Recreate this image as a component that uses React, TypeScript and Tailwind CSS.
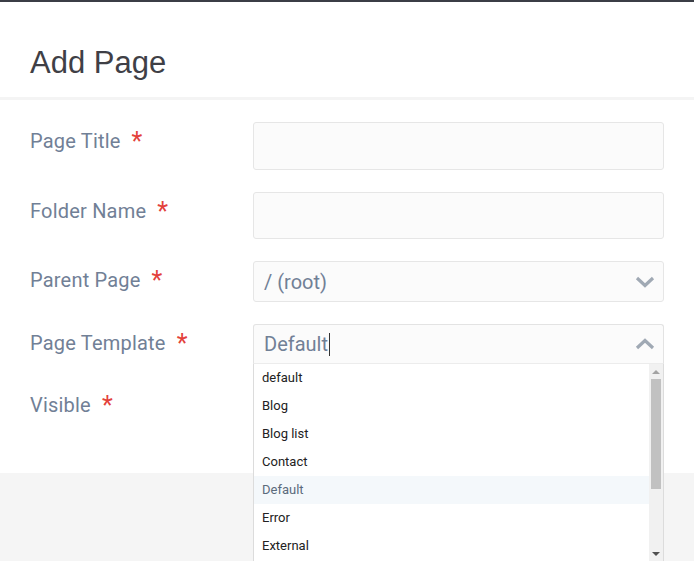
import React from 'react';

const templates = ['default', 'Blog', 'Blog list', 'Contact', 'Default', 'Error', 'External'];

const Label = ({ text }: { text: string }) => (
  <div className="flex w-[223px] shrink-0 items-start pt-[5px] text-[20px] leading-[28px] tracking-[0.2px] text-[#718096]">
    {text}
    <span className="ml-[11px] text-[25px] leading-[30px] text-[#e3413b]">*</span>
  </div>
);

const Chevron = ({ up }: { up?: boolean }) => (
  <svg width="20" height="12" viewBox="0 0 20 12" className="text-[#a0a9b4]">
    <polyline
      points={up ? '2,10 10,2.5 18,10' : '2,2 10,9.5 18,2'}
      fill="none"
      stroke="currentColor"
      strokeWidth="3.2"
      strokeLinejoin="miter"
    />
  </svg>
);

const Scrollbar = () => (
  <div className="flex w-[14px] shrink-0 flex-col items-center bg-[#f1f1f1]">
    <div className="flex h-[15px] w-full items-center justify-center">
      <div className="h-0 w-0 border-x-[4px] border-b-[4px] border-x-transparent border-b-[#a3a3a3]" />
    </div>
    <div className="h-[110px] w-[10px] bg-[#c1c1c1]" />
    <div className="flex-1" />
    <div className="flex h-[14px] w-full items-center justify-center">
      <div className="h-0 w-0 border-x-[4px] border-t-[4px] border-x-transparent border-t-[#505050]" />
    </div>
  </div>
);

export default function App() {
  return (
    <div className="flex h-[561px] w-[694px] flex-col overflow-hidden bg-white" style={{ fontFamily: 'Roboto, "Noto Sans", sans-serif' }}>
      <div className="h-[2px] bg-[#3b3e46]" />
      <header className="h-[98px] border-b-[3px] border-[#f4f4f4] px-[30px] pt-[43px]">
        <h1 className="text-[31px] leading-[36px] text-[#3f3f46]" style={{ fontFamily: '"Liberation Sans", Arial, sans-serif' }}>
          Add Page
        </h1>
      </header>

      <form className="flex flex-col gap-[22px] px-[30px] pt-[22px] pb-[47px]">
        <div className="flex">
          <Label text="Page Title" />
          <div className="h-[48px] flex-1 rounded-[3px] border border-[#e6e6e6] bg-[#fbfbfb]" />
        </div>
        <div className="flex">
          <Label text="Folder Name" />
          <div className="h-[47px] flex-1 rounded-[3px] border border-[#e6e6e6] bg-[#fbfbfb]" />
        </div>
        <div className="flex">
          <Label text="Parent Page" />
          <div className="flex h-[41px] flex-1 items-center justify-between rounded-[3px] border border-[#e6e6e6] bg-[#fbfbfb] pr-[8px] pl-[10px]">
            <span className="text-[20px] text-[#718096]">/ (root)</span>
            <Chevron />
          </div>
        </div>
        <div className="flex">
          <Label text="Page Template" />
          <div className="relative flex-1">
            <div className="flex h-[40px] items-center justify-between rounded-t-[3px] border border-[#e3e3e3] border-b-[#ececec] bg-[#fbfbfb] pr-[8px] pl-[10px]">
              <span className="flex items-center text-[20px] text-[#718096]">
                Default
                <span className="ml-[1px] inline-block h-[23px] w-px bg-[#333]" />
              </span>
              <Chevron up />
            </div>
            <div className="absolute top-[40px] right-0 left-0 z-10 flex h-[197px] border-x border-[#dcdcdc] bg-white">
              <ul className="flex-1">
                {templates.map((t) => (
                  <li
                    key={t}
                    className={
                      t === 'Default'
                        ? 'h-[28px] bg-[#f4f8fb] pl-[8px] text-[13px] leading-[28px] text-[#5b6b7c]'
                        : 'h-[28px] pl-[8px] text-[13px] leading-[28px] text-[#222]'
                    }
                  >
                    {t}
                  </li>
                ))}
              </ul>
              <Scrollbar />
            </div>
          </div>
        </div>
        <div className="flex h-[40px]">
          <Label text="Visible" />
          <div className="flex-1" />
        </div>
      </form>

      <div className="flex-1 bg-[#f5f5f5]" />
    </div>
  );
}
